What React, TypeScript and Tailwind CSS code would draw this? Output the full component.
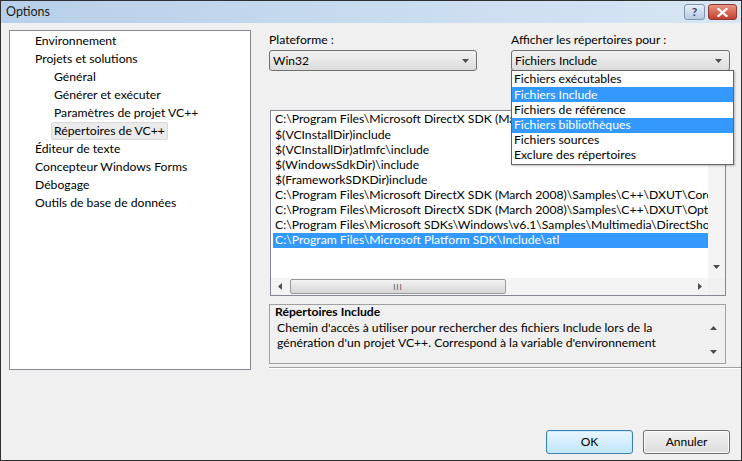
import React from "react";

const FONT = "font-['Lato','Noto_Sans',sans-serif]";

const treeItems = [
  { label: "Environnement", indent: false },
  { label: "Projets et solutions", indent: false },
  { label: "Général", indent: true },
  { label: "Générer et exécuter", indent: true },
  { label: "Paramètres de projet VC++", indent: true },
  { label: "Répertoires de VC++", indent: true, selected: true },
  { label: "Éditeur de texte", indent: false },
  { label: "Concepteur Windows Forms", indent: false },
  { label: "Débogage", indent: false },
  { label: "Outils de base de données", indent: false },
];

const dirs = [
  "C:\\Program Files\\Microsoft DirectX SDK (March 2008)\\Include",
  "$(VCInstallDir)include",
  "$(VCInstallDir)atlmfc\\include",
  "$(WindowsSdkDir)\\include",
  "$(FrameworkSDKDir)include",
  "C:\\Program Files\\Microsoft DirectX SDK (March 2008)\\Samples\\C++\\DXUT\\Core",
  "C:\\Program Files\\Microsoft DirectX SDK (March 2008)\\Samples\\C++\\DXUT\\Optional",
  "C:\\Program Files\\Microsoft SDKs\\Windows\\v6.1\\Samples\\Multimedia\\DirectShow\\BaseClasses",
  "C:\\Program Files\\Microsoft Platform SDK\\Include\\atl",
];

const popupItems = [
  { label: "Fichiers exécutables" },
  { label: "Fichiers Include", hl: true },
  { label: "Fichiers de référence" },
  { label: "Fichiers bibliothèques", hl: true },
  { label: "Fichiers sources" },
  { label: "Exclure des répertoires" },
];

function Arrow({ dir }: { dir: "down" | "up" | "left" | "right" }) {
  const pts = {
    down: "0,0 7,0 3.5,4",
    up: "0,4 7,4 3.5,0",
    left: "4,0 4,7 0,3.5",
    right: "0,0 0,7 4,3.5",
  }[dir];
  const w = dir === "down" || dir === "up" ? 7 : 4;
  const h = dir === "down" || dir === "up" ? 4 : 7;
  return (
    <svg width={w} height={h} viewBox={`0 0 ${w} ${h}`}>
      <polygon points={pts} fill="#4d4d4d" />
    </svg>
  );
}

function Combo({ value, width }: { value: string; width: string }) {
  return (
    <div
      className={`${width} h-[21px] flex items-center justify-between pl-[3px] pr-[7px] rounded-[3px] border border-[#707070] bg-gradient-to-b from-[#f2f2f2] to-[#dcdcdc] text-[12px] text-black`}
    >
      <span>{value}</span>
      <Arrow dir="down" />
    </div>
  );
}

export default function App() {
  return (
    <div
      className={`${FONT} w-[742px] h-[461px] flex flex-col border border-[#303030] bg-[#f0f0f0] text-[12.2px] text-black overflow-hidden`}
    >
      {/* title bar */}
      <div className="h-[22px] shrink-0 flex items-center justify-between pl-[5px] pr-[4px] bg-gradient-to-r from-[#b7cfe9] via-[#c8dbef] to-[#d8e6f4]">
        <span className="text-[12.5px] text-[#1a1a1a]">Options</span>
        <div className="flex items-center gap-[3px]">
          <div className="w-[21px] h-[16px] rounded-[3px] border border-[#7d94b3] bg-gradient-to-b from-[#e6eef8] to-[#b8cbe2] flex items-center justify-center text-[12px] font-bold text-[#33475f] leading-none">
            ?
          </div>
          <div className="w-[29px] h-[16px] rounded-[3px] border border-[#8c3a30] bg-gradient-to-b from-[#e79483] to-[#c43c2e] flex items-center justify-center">
            <svg width="11" height="9" viewBox="0 0 11 9">
              <path d="M1.5 1 L9.5 8 M9.5 1 L1.5 8" stroke="#ffffff" strokeWidth="2.2" strokeLinecap="square" />
            </svg>
          </div>
        </div>
      </div>

      {/* body */}
      <div className="flex-1 flex flex-col">
        <div className="flex pt-[7px] pl-[8px]">
          {/* tree */}
          <div className="w-[242px] h-[340px] border border-[#828790] bg-white pt-[1px]">
            {treeItems.map((t) => (
              <div
                key={t.label}
                className={`h-[18px] flex items-center ${t.indent ? "pl-[44px]" : "pl-[25px]"}`}
              >
                <span
                  className={
                    t.selected
                      ? "-ml-[3px] px-[2px] h-[18px] flex items-center border border-[#d9d9d9] rounded-[2px] bg-[#ebebeb]"
                      : ""
                  }
                >
                  {t.label}
                </span>
              </div>
            ))}
          </div>

          {/* right column */}
          <div className="ml-[18px] w-[464px] flex flex-col">
            <div className="flex gap-[34px]">
              <div className="flex flex-col">
                <div className="h-[20px] flex items-center">Plateforme :</div>
                <Combo value="Win32" width="w-[208px]" />
              </div>
              <div className="relative flex flex-col">
                <div className="h-[20px] flex items-center">Afficher les répertoires pour :</div>
                <Combo value="Fichiers Include" width="w-[219px]" />
                {/* dropdown popup */}
                <div className="absolute left-0 top-[40px] w-[223px] border border-[#646464] bg-white pt-[1px] pb-[1px] z-10 shadow-[1px_1px_2px_rgba(0,0,0,0.25)]">
                  {popupItems.map((p) => (
                    <div
                      key={p.label}
                      className={`h-[15.2px] flex items-center pl-[2px] ${p.hl ? "bg-[#3399ff] text-white" : ""}`}
                    >
                      {p.label}
                    </div>
                  ))}
                </div>
              </div>
            </div>

            {/* directories list */}
            <div className="mt-[39px] ml-[1px] w-[456px] h-[186px] border border-[#828790] bg-white flex flex-col">
              <div className="flex-1 flex">
                <div className="flex-1 overflow-hidden pt-[1px] pl-[2px]">
                  {dirs.map((d, i) => (
                    <div
                      key={i}
                      className={`h-[15.1px] flex items-center whitespace-nowrap pl-[2px] ${i === 8 ? "bg-[#3399ff] text-white" : ""}`}
                    >
                      {d}
                    </div>
                  ))}
                </div>
                <div className="w-[17px] bg-[#f4f4f4] flex flex-col justify-end items-center pb-[9px]">
                  <Arrow dir="down" />
                </div>
              </div>
              <div className="h-[17px] flex">
                <div className="flex-1 flex items-center bg-[#f4f4f4]">
                  <div className="w-[17px] flex justify-center">
                    <Arrow dir="left" />
                  </div>
                  <div className="ml-[2px] w-[216px] h-[15px] rounded-[2px] border border-[#9a9a9a] bg-gradient-to-b from-[#f3f3f3] to-[#d6d6d6] flex items-center justify-center">
                    <span className="text-[8px] tracking-[1px] text-[#555] leading-none">III</span>
                  </div>
                  <div className="flex-1" />
                  <div className="w-[17px] flex justify-center">
                    <Arrow dir="right" />
                  </div>
                </div>
                <div className="w-[17px] bg-[#f0f0f0]" />
              </div>
            </div>

            {/* description */}
            <div className="mt-[8px] w-[457px] h-[60px] border border-[#a0a0a0] flex">
              <div className="flex-1 pl-[5px]">
                <div className="h-[15px] flex items-center font-bold">Répertoires Include</div>
                <div className="pl-[2px] leading-[15px]">
                  <div>Chemin d'accès à utiliser pour rechercher des fichiers Include lors de la</div>
                  <div>génération d'un projet VC++. Correspond à la variable d'environnement</div>
                </div>
              </div>
              <div className="w-[17px] mr-[3px] mt-[21px] mb-[9px] flex flex-col items-center justify-between">
                <Arrow dir="up" />
                <Arrow dir="down" />
              </div>
            </div>

            {/* separator */}
            <div className="mt-[3px] w-[474px] h-[2px] border-t border-[#a0a0a0] border-b border-b-white" />
          </div>
        </div>

        {/* buttons */}
        <div className="mt-[60px] flex justify-end gap-[10px] pr-[11px]">
          <button className="w-[87px] h-[24px] rounded-[3px] border border-[#3c7fb1] bg-gradient-to-b from-[#eaf6fd] to-[#bee6fd] text-[12px] shadow-[inset_0_0_0_1px_#c8eafc]">
            OK
          </button>
          <button className="w-[87px] h-[24px] rounded-[3px] border border-[#707070] bg-gradient-to-b from-[#f2f2f2] to-[#dddddd] text-[12px] shadow-[inset_0_0_0_1px_#fcfcfc]">
            Annuler
          </button>
        </div>
      </div>
    </div>
  );
}
